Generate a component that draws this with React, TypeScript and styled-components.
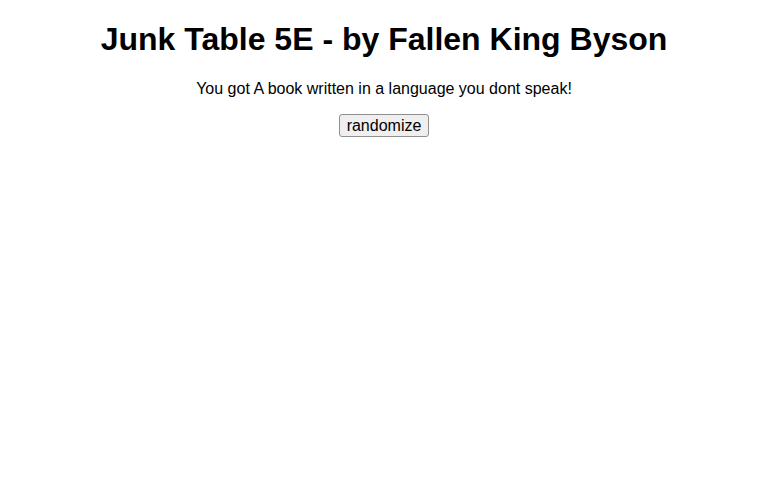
import React, { useState } from "react";
import styled, { createGlobalStyle } from "styled-components";

const items = [
  "A book written in a language you dont speak!",
  "A bent copper spoon",
  "A jar of murky water",
  "A single left boot",
  "A rusty key to an unknown lock",
];

const GlobalStyle = createGlobalStyle`
  body {
    margin: 0;
    background: #ffffff;
    color: #000000;
    font-family: "Liberation Sans", Arial, sans-serif;
  }
`;

const Page = styled.div`
  text-align: center;
`;

const Title = styled.h1`
  font-size: 32px;
  font-weight: bold;
  margin: 21.44px 0;
`;

const Result = styled.p`
  font-size: 16px;
  margin: 16px 0;
`;

const RandomButton = styled.button`
  font-family: "Liberation Sans", Arial, sans-serif;
  font-size: 16px;
  color: #000000;
  background: #efefef;
  border: 1px solid #8f8f8f;
  border-radius: 3px;
  padding: 2px 7px 1px;
  cursor: pointer;
`;

export default function App() {
  const [index, setIndex] = useState(0);
  return (
    <Page>
      <GlobalStyle />
      <Title>Junk Table 5E - by Fallen King Byson</Title>
      <Result>You got {items[index]}</Result>
      <RandomButton onClick={() => setIndex(Math.floor(Math.random() * items.length))}>
        randomize
      </RandomButton>
    </Page>
  );
}
